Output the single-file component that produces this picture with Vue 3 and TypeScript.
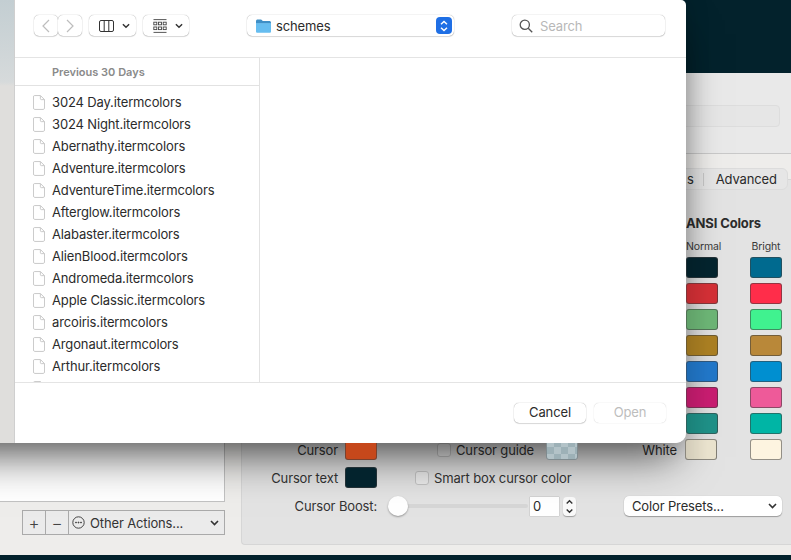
<script setup lang="ts">
const files: string[] = [
  '3024 Day', '3024 Night', 'Abernathy', 'Adventure', 'AdventureTime', 'Afterglow', 'Alabaster',
  'AlienBlood', 'Andromeda', 'Apple Classic', 'arcoiris', 'Argonaut', 'Arthur', ''
]
const ansi: [string, string][] = [
  ['#03232d', '#006a8f'],
  ['#d12f35', '#ff2d4a'],
  ['#6bb374', '#40f28f'],
  ['#a97e22', '#b98839'],
  ['#2176c7', '#008fd0'],
  ['#c61c6f', '#ee5a99'],
  ['#1e8f86', '#00b5a5']
]
</script>

<template>
  <div class="desktop">
    <div class="strip"></div>

    <section class="prefs">
      <header class="prefs-head"><div class="prefs-input"></div></header>
      <div class="prefs-body">
        <aside class="side">
          <div class="profile-list"></div>
          <div class="actions">
            <span class="act act-sq">+</span>
            <span class="act act-sq">−</span>
            <span class="act act-menu">
              <svg width="13" height="13" viewBox="0 0 13 13" fill="none" stroke="#444" stroke-width="1">
                <circle cx="6.5" cy="6.5" r="5.7" />
                <circle cx="4" cy="6.5" r=".5" fill="#444" />
                <circle cx="6.5" cy="6.5" r=".5" fill="#444" />
                <circle cx="9" cy="6.5" r=".5" fill="#444" />
              </svg>
              <span class="act-label">Other Actions...</span>
              <svg class="chev" width="9" height="6" viewBox="0 0 9 6" fill="none" stroke="#333" stroke-width="1.6"><path d="M1 1l3.5 3.5L8 1" /></svg>
            </span>
          </div>
        </aside>

        <main class="panel">
          <div class="tabs-row">
            <div class="tabs"><span class="tab-frag">s</span><i class="tab-sep"></i><span class="tab-adv">Advanced</span></div>
          </div>

          <div class="ansi">
            <h3 class="ansi-title">ANSI Colors</h3>
            <div class="ansi-heads"><span>Normal</span><span>Bright</span></div>
            <div v-for="(pair, i) in ansi" :key="i" class="ansi-row">
              <span class="swatch swatch-normal" :style="{ backgroundColor: pair[0] }"></span>
              <span class="swatch" :style="{ backgroundColor: pair[1] }"></span>
            </div>
          </div>

          <div class="row row-cursor">
            <span class="lab">Cursor</span>
            <span class="swatch swatch-cursor"></span>
            <span class="check check-guide"></span>
            <span class="txt txt-guide">Cursor guide</span>
            <span class="swatch swatch-guide"></span>
            <span class="lab-white">White</span>
            <span class="swatch swatch-normal swatch-white"></span>
            <span class="swatch swatch-cream"></span>
          </div>

          <div class="row row-text">
            <span class="lab">Cursor text</span>
            <span class="swatch swatch-dark"></span>
            <span class="check check-smart"></span>
            <span class="txt">Smart box cursor color</span>
          </div>

          <div class="row row-boost">
            <span class="lab lab-boost">Cursor Boost:</span>
            <span class="slider"><span class="knob"></span></span>
            <span class="num">0</span>
            <span class="stepper">
              <svg width="13" height="19" viewBox="0 0 13 19" fill="none" stroke="#333" stroke-width="1.4">
                <path d="M3.7 6.5l2.8-2.8 2.8 2.8M3.7 12.5l2.8 2.8 2.8-2.8" />
              </svg>
            </span>
            <span class="presets">
              Color Presets...
              <svg width="9" height="6" viewBox="0 0 9 6" fill="none" stroke="#333" stroke-width="1.6"><path d="M1 1l3.5 3.5L8 1" /></svg>
            </span>
          </div>
        </main>
      </div>
    </section>

    <div class="sheet-shadow"></div>

    <section class="dialog">
      <header class="toolbar">
        <div class="nav">
          <span class="nav-btn">
            <svg width="8" height="14" viewBox="0 0 8 14" fill="none" stroke="#bdbdbd" stroke-width="1.2"><path d="M7 1L1 7l6 6" /></svg>
          </span>
          <span class="nav-btn">
            <svg width="8" height="14" viewBox="0 0 8 14" fill="none" stroke="#bdbdbd" stroke-width="1.2"><path d="M1 1l6 6-6 6" /></svg>
          </span>
        </div>
        <span class="tool tool-view">
          <svg width="15" height="12" viewBox="0 0 15 12" fill="none" stroke="#333" stroke-width="1">
            <rect x=".5" y=".5" width="14" height="11" rx="1.5" />
            <path d="M5.2 .5v11M9.8 .5v11" />
          </svg>
          <svg width="8" height="6" viewBox="0 0 9 6" fill="none" stroke="#333" stroke-width="1.6"><path d="M1 1l3.5 3.5L8 1" /></svg>
        </span>
        <span class="tool tool-group">
          <svg width="14" height="14" viewBox="0 0 14 14" fill="none" stroke="#444" stroke-width=".9">
            <path d="M.5 .6h13M.5 13.4h13" />
            <rect x=".8" y="3.2" width="3" height="2.6" /><rect x="5.5" y="3.2" width="3" height="2.6" /><rect x="10.2" y="3.2" width="3" height="2.6" />
            <rect x=".8" y="8" width="3" height="2.6" /><rect x="5.5" y="8" width="3" height="2.6" /><rect x="10.2" y="8" width="3" height="2.6" />
          </svg>
          <svg width="8" height="6" viewBox="0 0 9 6" fill="none" stroke="#333" stroke-width="1.6"><path d="M1 1l3.5 3.5L8 1" /></svg>
        </span>
        <span class="path">
          <svg width="15" height="14" viewBox="0 0 15 14">
            <path d="M0 2.2C0 1.2.7.6 1.6.6h3.2c.6 0 .9.2 1.3.7l.6.8h6.7c.9 0 1.6.7 1.6 1.6v1H0z" fill="#3f8fc6" />
            <path d="M0 4.2h15v8.2c0 .8-.6 1.4-1.4 1.4H1.4C.6 13.8 0 13.2 0 12.4z" fill="#66bdf0" />
          </svg>
          <span class="path-name">schemes</span>
          <span class="path-step">
            <svg width="8" height="12" viewBox="0 0 8 12" fill="none" stroke="#fff" stroke-width="1.4"><path d="M1 4.2L4 1.4l3 2.8M1 7.8l3 2.8 3-2.8" /></svg>
          </span>
        </span>
        <span class="search">
          <svg width="14" height="14" viewBox="0 0 14 14" fill="none" stroke="#555" stroke-width="1.3">
            <circle cx="5.8" cy="5.8" r="4.6" /><path d="M9.2 9.2l4 4" />
          </svg>
          <span class="search-ph">Search</span>
        </span>
      </header>

      <div class="browser">
        <div class="col-list">
          <div class="list-head">Previous 30 Days</div>
          <ul class="files">
            <li v-for="f in files" :key="f" class="file">
              <svg width="12" height="15" viewBox="0 0 13 16" fill="#fff" stroke="#c4c4c4" stroke-width="1">
                <path d="M1.5 .5h6.6l4.4 4.4v9.1c0 .8-.6 1.5-1.4 1.5H1.9c-.8 0-1.4-.7-1.4-1.5V1.9C.5 1.1.8 .5 1.5 .5z" />
                <path d="M8 .7v3.2c0 .6.4 1 1 1h3.3" fill="none" />
              </svg>
              <span v-if="f">{{ f }}.itermcolors</span>
            </li>
          </ul>
        </div>
        <div class="col-empty"></div>
      </div>

      <footer class="foot">
        <span class="btn">Cancel</span>
        <span class="btn btn-off">Open</span>
      </footer>
    </section>
  </div>
</template>

<style>
html, body { margin: 0; background: #03222c; }
</style>

<style scoped>
.desktop {
  position: relative;
  width: 791px;
  height: 560px;
  overflow: hidden;
  background: #03222c;
  font-family: Inter, "Liberation Sans", sans-serif;
  font-size: 13px;
  letter-spacing: -.14px;
  color: #2b2b2b;
}
.strip {
  position: absolute;
  z-index: 4;
  left: 0;
  top: 0;
  box-sizing: border-box;
  width: 15px;
  height: 443px;
  background: linear-gradient(#c3ced2 0, #d6dadb 82px, #dfdedc 86px, #dfdedc 100%);
  border-right: 1px solid #cfcfcf;
}

/* preferences window behind the sheet */
.prefs {
  position: absolute;
  left: 0;
  top: 73px;
  width: 791px;
  height: 482px;
  display: flex;
  flex-direction: column;
  background: #eeedeb;
}
.prefs-head {
  box-sizing: border-box;
  height: 81px;
  flex: none;
  padding: 32px 11px 0 0;
  background: #e9e9e9;
  border-bottom: 1px solid #c9c9c9;
}
.prefs-input {
  height: 20px;
  margin-left: 400px;
  border: 1px solid #dddddd;
  border-radius: 4px;
  background: #e6e6e6;
}
.prefs-body {
  flex: 1;
  display: flex;
  min-height: 0;
}
.side {
  width: 241px;
  flex: none;
  display: flex;
  flex-direction: column;
  padding-bottom: 20px;
  box-sizing: border-box;
}
.profile-list {
  flex: 1;
  width: 225px;
  box-sizing: border-box;
  background: #fff;
  border: 1px solid #c2c2c2;
  border-left: 0;
}
.actions {
  display: flex;
  width: 203px;
  height: 25px;
  margin: 8px 0 0 22px;
  box-sizing: border-box;
  border: 1px solid #aaaaaa;
  background: #ebebeb;
}
.act {
  display: flex;
  align-items: center;
  justify-content: center;
  border-right: 1px solid #aaaaaa;
  font-size: 17px;
  font-weight: 300;
  color: #444;
}
.act-sq { width: 22px; flex: none; }
.act-menu {
  flex: 1;
  border-right: 0;
  justify-content: flex-start;
  padding: 0 5px 0 3px;
  gap: 5px;
  font-size: 13px;
  font-weight: 400;
  color: #333;
}
.act-label { flex: 1; }

.panel {
  flex: 1;
  box-sizing: border-box;
  display: flex;
  flex-direction: column;
  margin-top: 25px;
  margin-bottom: 10px;
  background: #e3e3e3;
  border: 1px solid #d6d6d6;
  border-right: 0;
  border-radius: 4px 0 0 4px;
  padding-right: 9px;
}
.tabs-row {
  display: flex;
  justify-content: flex-end;
  height: 22px;
  margin: -12px -6px 0 0;
}
.tabs {
  display: flex;
  align-items: center;
  width: 130px;
  height: 22px;
  box-sizing: border-box;
  background: #e6e6e6;
  border: 1px solid #dcdcdc;
  border-radius: 6px;
  padding-left: 28px;
}
.tab-sep { width: 1px; height: 13px; background: #c8c8c8; margin: 0 12px 0 9px; }
.ansi {
  align-self: flex-end;
  width: 96px;
  display: flex;
  flex-direction: column;
  margin-top: 25px;
}
.ansi-title {
  margin: 0;
  font-size: 13px;
  font-weight: 700;
  line-height: 16px;
  color: #2d2d2d;
}
.ansi-heads {
  display: flex;
  justify-content: space-between;
  margin: 9px 0 3px;
  font-size: 10.5px;
  line-height: 14px;
  color: #3a3a3a;
}
.ansi-heads span { width: 32px; text-align: center; white-space: nowrap; }
.ansi-row {
  display: flex;
  justify-content: space-between;
  height: 26px;
}
.swatch {
  position: relative;
  z-index: 2;
  display: block;
  box-sizing: border-box;
  width: 32px;
  height: 21px;
  flex: none;
  border: 1px solid rgba(60, 60, 60, .55);
  border-radius: 3px;
}
.swatch-normal {
  background-image: linear-gradient(90deg, rgba(0, 0, 0, .1), rgba(0, 0, 0, 0) 70%);
}
.row {
  display: flex;
  align-items: center;
}
.row-cursor { height: 21px; }
.row-text { height: 21px; margin-top: 7px; }
.row-boost { height: 22px; margin-top: 7px; }
.lab {
  width: 96px;
  flex: none;
  text-align: right;
  margin-right: 7px;
  color: #333;
}
.swatch-cursor { background: #c6481b; }
.swatch-dark { background: #03232d; }
.swatch-guide {
  background: repeating-conic-gradient(#9db1b7 0 25%, #b3c3c8 0 50%) 0 0 / 14px 14px;
  border-color: #7f8b8f;
}
.swatch-white { background-color: #e9e2cd; }
.swatch-cream { background: #fdf4e0; margin-left: 33px; }
.check {
  display: block;
  box-sizing: border-box;
  width: 14px;
  height: 14px;
  flex: none;
  border: 1px solid #c4c4c4;
  border-radius: 3px;
  background: #ececec;
}
.check-guide { margin: 0 5px 0 60px; }
.check-smart { margin: 0 5px 0 38px; }
.txt { color: #333; white-space: nowrap; }
.txt-guide { width: 90px; flex: none; }
.lab-white { margin-left: auto; margin-right: 8px; color: #2b2b2b; }
.lab-boost { width: 135px; margin-right: 11px; }
.slider {
  position: relative;
  width: 140px;
  height: 4px;
  flex: none;
  border-radius: 2px;
  background: #d6d6d6;
}
.knob {
  position: absolute;
  left: 0;
  top: -8px;
  width: 20px;
  height: 20px;
  border-radius: 50%;
  background: #fff;
  box-shadow: 0 1px 2px rgba(0, 0, 0, .35);
}
.num {
  box-sizing: border-box;
  width: 29px;
  height: 19px;
  flex: none;
  margin-left: 2px;
  padding-left: 3px;
  line-height: 19px;
  background: #fff;
  box-shadow: 0 0 1px rgba(0, 0, 0, .4);
}
.stepper {
  display: flex;
  flex: none;
  width: 13px;
  height: 19px;
  margin-left: 4px;
  border-radius: 4px;
  background: #fafafa;
  box-shadow: 0 1px 1px rgba(0, 0, 0, .3);
}
.presets {
  display: flex;
  align-items: center;
  justify-content: space-between;
  box-sizing: border-box;
  width: 158px;
  height: 20px;
  flex: none;
  margin-left: auto;
  padding: 0 5px 0 8px;
  background: #fff;
  border-radius: 5px;
  box-shadow: 0 1px 1px rgba(0, 0, 0, .3), 0 0 1px rgba(0, 0, 0, .2);
}

/* open-file sheet */
.sheet-shadow {
  position: absolute;
  z-index: 1;
  left: -65px;
  top: 0;
  width: 751px;
  height: 443px;
  border-radius: 0 5px 10px 0;
  box-shadow: 0 24px 40px -10px rgba(0, 0, 0, .6), 0 0 24px rgba(0, 0, 0, .16);
}
.dialog {
  position: absolute;
  z-index: 3;
  left: 15px;
  top: 0;
  width: 671px;
  height: 443px;
  display: flex;
  flex-direction: column;
  background: #fff;
  border-radius: 0 5px 10px 0;
}
.toolbar {
  box-sizing: border-box;
  height: 58px;
  flex: none;
  display: flex;
  align-items: flex-start;
  padding: 15px 0 0 19px;
  border-bottom: 1px solid #e4e4e4;
}
.nav { display: flex; }
.nav-btn, .tool, .path, .search, .btn {
  box-sizing: border-box;
  background: #fff;
  box-shadow: 0 0 1px rgba(0, 0, 0, .45), 0 1px 1px rgba(0, 0, 0, .12);
}
.nav-btn {
  width: 24px;
  height: 21px;
  display: flex;
  align-items: center;
  justify-content: center;
  border-radius: 5px;
}
.tool {
  height: 21px;
  display: flex;
  align-items: center;
  justify-content: center;
  gap: 8px;
  padding-left: 4px;
  border-radius: 5px;
}
.tool-view { width: 47px; margin-left: 7px; }
.tool-group { width: 46px; margin-left: 7px; }
.path {
  width: 207px;
  height: 21px;
  margin-left: 58px;
  display: flex;
  align-items: center;
  padding: 0 2px 0 9px;
  border-radius: 5px;
}
.path-name { flex: 1; margin-left: 5px; }
.path-step {
  width: 16px;
  height: 17px;
  display: flex;
  align-items: center;
  justify-content: center;
  border-radius: 4px;
  background: #1f6fe5;
}
.search {
  width: 153px;
  height: 21px;
  margin-left: 58px;
  display: flex;
  align-items: center;
  gap: 7px;
  padding-left: 7px;
  border-radius: 5px;
}
.search-ph { color: #b8b8b8; }

.browser {
  flex: 1;
  min-height: 0;
  display: flex;
}
.col-list {
  width: 245px;
  flex: none;
  box-sizing: border-box;
  border-right: 1px solid #e2e2e2;
  overflow: hidden;
}
.col-empty { flex: 1; }
.list-head {
  box-sizing: border-box;
  height: 28px;
  padding: 7px 0 0 37px;
  font-size: 11px;
  line-height: 14px;
  font-weight: 600;
  letter-spacing: 0;
  color: #8a8a8a;
  border-bottom: 1px solid #e2e2e2;
}
.files {
  list-style: none;
  margin: 0;
  padding: 5px 0 0;
}
.file {
  display: flex;
  align-items: center;
  height: 22px;
  padding-left: 18px;
  gap: 7px;
  color: #2b2b2b;
  white-space: nowrap;
}
.foot {
  box-sizing: border-box;
  height: 61px;
  flex: none;
  display: flex;
  justify-content: flex-end;
  gap: 8px;
  padding: 20px 20px 0 0;
  border-top: 1px solid #e4e4e4;
}
.btn {
  width: 72px;
  height: 20px;
  padding-bottom: 2px;
  display: flex;
  align-items: center;
  justify-content: center;
  border-radius: 5px;
}
.btn-off {
  color: #bdbdbd;
  box-shadow: 0 0 1px rgba(0, 0, 0, .25);
}
</style>
